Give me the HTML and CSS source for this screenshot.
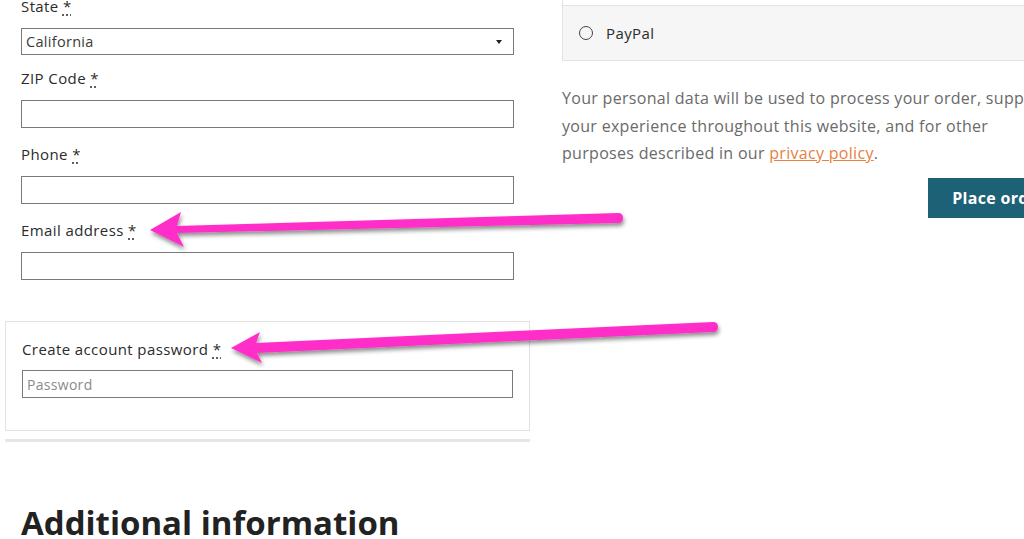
FILE: index.html
```html
<!DOCTYPE html>
<html lang="en">
<head>
<meta charset="utf-8">
<title>Checkout</title>
<link rel="stylesheet" href="styles.css">
</head>
<body>
<div class="page">
  <div class="col-left">
    <div class="field field-select">
      <label class="label">State <abbr class="req" title="required">*</abbr></label>
      <div class="select">California<span class="caret"></span></div>
    </div>
    <div class="field">
      <label class="label">ZIP Code <abbr class="req" title="required">*</abbr></label>
      <input class="input" type="text">
    </div>
    <div class="field">
      <label class="label">Phone <abbr class="req" title="required">*</abbr></label>
      <input class="input" type="text">
    </div>
    <div class="field">
      <label class="label">Email address <abbr class="req" title="required">*</abbr></label>
      <input class="input" type="text">
    </div>
    <div class="account-box">
      <label class="label">Create account password <abbr class="req" title="required">*</abbr></label>
      <input class="input" type="password" placeholder="Password">
    </div>
    <div class="sep"></div>
    <h3 class="heading">Additional information</h3>
  </div>
  <div class="col-right">
    <ul class="methods">
      <li class="method method-prev"></li>
      <li class="method method-paypal"><span class="radio"></span><span class="method-name">PayPal</span></li>
    </ul>
    <p class="privacy">Your personal data will be used to process your order, support your experience throughout this website, and for other purposes described in our <a class="link" href="#">privacy policy</a>.</p>
    <div class="actions"><button class="place-order" type="button">Place order</button></div>
  </div>
  <svg class="annotations" width="1024" height="539" viewBox="0 0 1024 539">
    <defs>
      <filter id="sh" x="-10%" y="-50%" width="120%" height="200%">
        <feDropShadow dx="1" dy="3" stdDeviation="2" flood-color="#000" flood-opacity="0.45"/>
      </filter>
    </defs>
    <g fill="#ff2fc9" filter="url(#sh)">
      <path d="M150 230 L181 212 L177 226 L618 213 Q623 213 623 218 Q623 223 618 223 L177 233 L184 247 Z"/>
      <path d="M231 348 L260 332 L256 343 L713 322 Q718 322 718 327 Q718 332 713 332 L257 353 L262 363 Z"/>
    </g>
  </svg>
</div>
</body>
</html>
```
FILE: styles.css
```css
html, body {
  margin: 0;
  padding: 0;
  background: #fff;
}
body {
  width: 1024px;
  height: 539px;
  overflow: hidden;
  font-family: "Open Sans", "Liberation Sans", sans-serif;
  color: #2b2b2b;
}
.page {
  position: relative;
  display: flex;
  align-items: flex-start;
  width: 1100px;
}
.col-left {
  width: 525px;
  margin-left: 5px;
  margin-top: -5px;
  flex-shrink: 0;
}
.field {
  padding: 0 16px;
  margin-bottom: 15px;
}
.field-select {
  margin-bottom: 12px;
}
.label {
  display: block;
  font-size: 15px;
  line-height: 22px;
  letter-spacing: 0.4px;
  margin-bottom: 11px;
  color: #2b2b2b;
}
.req {
  text-decoration: underline dotted;
  text-underline-offset: 3px;
  cursor: help;
}
.select {
  position: relative;
  box-sizing: border-box;
  height: 27px;
  border: 1px solid #7a7a7a;
  padding: 0 4px;
  font-size: 14.5px;
  line-height: 25px;
  letter-spacing: 0.3px;
  color: #3a3a3a;
}
.caret {
  position: absolute;
  right: 11px;
  top: 11px;
  width: 0;
  height: 0;
  border-left: 3px solid transparent;
  border-right: 3px solid transparent;
  border-top: 4px solid #222;
}
.input {
  display: block;
  box-sizing: border-box;
  width: 100%;
  height: 28px;
  margin: 0;
  border: 1px solid #7a7a7a;
  border-radius: 0;
  padding: 0 4px;
  font-family: inherit;
  font-size: 14px;
  letter-spacing: 0.3px;
  color: #333;
  background: #fff;
}
.input::placeholder {
  color: #8a8a8a;
}
.account-box {
  margin-top: 41px;
  border: 1px solid #e2e2e2;
  padding: 16px 16px 32px;
}
.account-box .label {
  margin-bottom: 10px;
}
.sep {
  height: 3px;
  margin-top: 8px;
  background: #e6e6e6;
}
.heading {
  margin: 61px 0 0 16px;
  font-size: 33px;
  line-height: 40px;
  font-weight: 700;
  color: #222;
}
.col-right {
  width: 495px;
  margin-left: 32px;
  flex-shrink: 0;
}
.methods {
  list-style: none;
  margin: 0;
  padding: 0;
  border-left: 1px solid #e3e3e3;
  width: 520px;
}
.method-prev {
  height: 5px;
  background: #fff;
  border-bottom: 1px solid #e3e3e3;
}
.method-paypal {
  display: flex;
  align-items: center;
  height: 54px;
  padding-left: 16px;
  background: #f6f6f6;
  border-bottom: 1px solid #e3e3e3;
}
.radio {
  box-sizing: border-box;
  width: 14px;
  height: 14px;
  border: 1.5px solid #444;
  border-radius: 50%;
  margin-right: 13px;
}
.method-name {
  font-size: 15px;
  letter-spacing: 0.4px;
  color: #2b2b2b;
}
.privacy {
  margin: 24px 0 0;
  font-size: 16px;
  line-height: 27.5px;
  letter-spacing: 0.3px;
  color: #6a6a6a;
}
.link {
  color: #e8803f;
  text-decoration: underline;
}
.actions {
  display: flex;
  justify-content: flex-end;
  margin-top: 10px;
  width: 508px;
}
.place-order {
  height: 40px;
  padding: 0 24px;
  border: 0;
  border-radius: 0;
  background: #1d6176;
  color: #fff;
  font-family: inherit;
  font-size: 16px;
  font-weight: 700;
  letter-spacing: 0.3px;
}
.annotations {
  position: absolute;
  left: 0;
  top: 0;
  pointer-events: none;
}
```
